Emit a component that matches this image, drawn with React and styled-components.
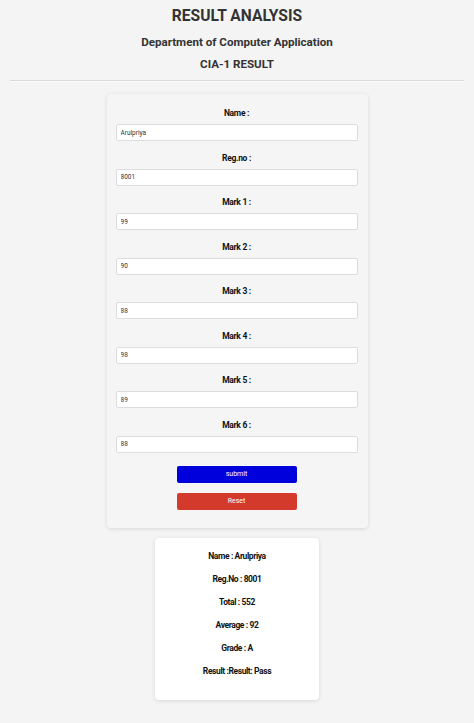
import styled, { createGlobalStyle } from 'styled-components';

const GlobalStyle = createGlobalStyle`
  html, body {
    margin: 0;
    padding: 0;
    background: #f4f4f4;
    font-family: Roboto, "Liberation Sans", sans-serif;
    color: #222;
  }
`;

const Page = styled.div`
  width: 474px;
  min-height: 723px;
  padding: 0 10px;
  box-sizing: border-box;
  display: flex;
  flex-direction: column;
  align-items: center;
`;

const Header = styled.header`
  width: 100%;
  text-align: center;
  padding-top: 6px;
  border-bottom: 1px solid #d8d8d8;
  padding-bottom: 8px;
  box-shadow: 0 1px 0 #fbfbfb;

  h1 {
    margin: 0;
    font-size: 15.6px;
    line-height: 20px;
    font-weight: 700;
    color: #333;
  }
  h2 {
    margin: 8px 0 0;
    font-size: 11.6px;
    line-height: 16px;
    font-weight: 700;
    color: #333;
  }
  h3 {
    margin: 6px 0 0;
    font-size: 11.6px;
    line-height: 16px;
    font-weight: 700;
    color: #333;
  }
`;

const FormCard = styled.form`
  width: 261px;
  box-sizing: border-box;
  margin-top: 13px;
  padding: 14px 10px 18px 9px;
  background: #f5f5f5;
  border-radius: 4px;
  box-shadow: 0 1px 4px rgba(0, 0, 0, 0.12);
  display: flex;
  flex-direction: column;
`;

const Field = styled.div`
  display: flex;
  flex-direction: column;
  margin-bottom: 11.5px;
`;

const Label = styled.label`
  text-align: center;
  font-size: 8.5px;
  line-height: 11px;
  letter-spacing: -0.3px;
  font-weight: 700;
  color: #111;
  margin-bottom: 5px;
`;

const Input = styled.input`
  height: 17px;
  box-sizing: border-box;
  border: 1px solid #dcdcdc;
  border-radius: 2px;
  background: #fff;
  padding: 0 4px;
  font-family: Roboto, "Liberation Sans", sans-serif;
  font-size: 6.5px;
  color: #333;
  outline: none;
`;

const Button = styled.button`
  align-self: center;
  width: 120px;
  height: 17px;
  border: none;
  border-radius: 2px;
  background: ${(p) => p.$bg};
  color: #fff;
  font-family: Roboto, "Liberation Sans", sans-serif;
  font-size: 7px;
  margin-top: ${(p) => p.$mt}px;
  padding: 0;
`;

const ResultCard = styled.section`
  width: 164px;
  box-sizing: border-box;
  margin-top: 10px;
  padding: 13.5px 0 22.5px;
  background: #fff;
  border-radius: 4px;
  box-shadow: 0 1px 4px rgba(0, 0, 0, 0.12);
  display: flex;
  flex-direction: column;
  gap: 12px;
  align-items: center;
`;

const ResultLine = styled.p`
  margin: 0;
  font-size: 8.5px;
  line-height: 11px;
  letter-spacing: -0.4px;
  font-weight: 700;
  color: #111;
`;

const fields = [
  ['Name :', 'Arulpriya'],
  ['Reg.no :', '8001'],
  ['Mark 1 :', '99'],
  ['Mark 2 :', '90'],
  ['Mark 3 :', '88'],
  ['Mark 4 :', '98'],
  ['Mark 5 :', '89'],
  ['Mark 6 :', '88'],
];

const results = [
  'Name : Arulpriya',
  'Reg.No : 8001',
  'Total : 552',
  'Average : 92',
  'Grade : A',
  'Result :Result: Pass',
];

export default function App() {
  return (
    <>
      <GlobalStyle />
      <Page>
        <Header>
          <h1>RESULT ANALYSIS</h1>
          <h2>Department of Computer Application</h2>
          <h3>CIA-1 RESULT</h3>
        </Header>
        <FormCard onSubmit={(e) => e.preventDefault()}>
          {fields.map(([label, value]) => (
            <Field key={label}>
              <Label>{label}</Label>
              <Input defaultValue={value} />
            </Field>
          ))}
          <Button type="submit" $bg="#0000dd" $mt={1.5}>submit</Button>
          <Button type="reset" $bg="#d33a2c" $mt={10}>Reset</Button>
        </FormCard>
        <ResultCard>
          {results.map((r) => (
            <ResultLine key={r}>{r}</ResultLine>
          ))}
        </ResultCard>
      </Page>
    </>
  );
}
